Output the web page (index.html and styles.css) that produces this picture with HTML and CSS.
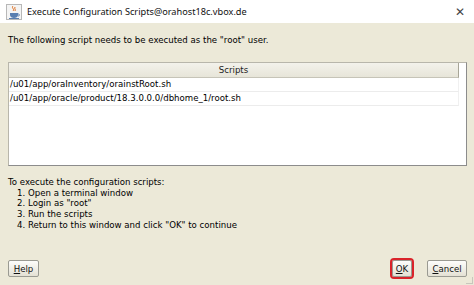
FILE: index.html
```html
<!DOCTYPE html>
<html>
<head>
    <title>Execute Configuration Scripts</title>
    <link rel="stylesheet" href="styles.css">
</head>
<body>
    <div class="window">
        <div class="titlebar">
            <svg class="app-icon" width="16" height="16" viewBox="0 0 16 16">
                <rect x="0.5" y="0.5" width="15" height="15" fill="#f4f4f4" stroke="#b8b8b8"/>
                <path d="M7 2 C5 4 9 5 7 7" fill="none" stroke="#e07020" stroke-width="1"/>
                <path d="M9 3 C8 5 10 5 9 7" fill="none" stroke="#e07020" stroke-width="1"/>
                <path d="M4 9 H12 V11 C12 13 10 14 8 14 C6 14 4 13 4 11 Z" fill="#5a7fb0"/>
                <path d="M12 10 C14 10 14 12 12 12" fill="none" stroke="#5a7fb0"/>
                <rect x="3" y="14" width="10" height="1" fill="#5a7fb0"/>
            </svg>
            <span class="title">Execute Configuration Scripts@orahost18c.vbox.de</span>
            <span class="close">&#x2715;</span>
        </div>

        <div class="content">
            <p class="intro">The following script needs to be executed as the "root" user.</p>

            <div class="table-box">
                <div class="table-head">Scripts</div>
                <div class="row">/u01/app/oraInventory/orainstRoot.sh</div>
                <div class="row">/u01/app/oracle/product/18.3.0.0.0/dbhome_1/root.sh</div>
            </div>

            <div class="steps">
                <div>To execute the configuration scripts:</div>
                <ol>
                    <li>Open a terminal window</li>
                    <li>Login as "root"</li>
                    <li>Run the scripts</li>
                    <li>Return to this window and click "OK" to continue</li>
                </ol>
            </div>
        </div>

        <div class="footer">
            <button class="btn btn-help"><u>H</u>elp</button>
            <div class="right-buttons">
                <button class="btn btn-ok"><u>O</u>K</button>
                <button class="btn btn-cancel"><u>C</u>ancel</button>
            </div>
        </div>
        <span class="grip"></span>
    </div>
</body>
</html>
```

FILE: styles.css
```css
html, body {
    margin: 0;
    padding: 0;
}
body {
    width: 474px;
    height: 285px;
    overflow: hidden;
    font-family: "DejaVu Sans", Tahoma, sans-serif;
    font-size: 8.6px;
    color: #000;
    background-color: #ece9d8;
}
.window {
    position: relative;
    height: 285px;
    display: flex;
    flex-direction: column;
}
.titlebar {
    height: 23px;
    background-color: #ffffff;
    display: flex;
    align-items: center;
    padding: 0 9px 0 6px;
    font-family: "Noto Sans", sans-serif;
    font-size: 9.2px;
    color: #111;
}
.app-icon {
    margin-right: 5px;
}
.title {
    flex: 1;
}
.close {
    font-size: 12px;
    color: #444;
}
.content {
    padding: 0 7px 0 8px;
    flex: 1;
}
.intro {
    margin: 11px 0 0 0;
    line-height: 12px;
}
.table-box {
    margin-top: 16px;
    height: 104px;
    border: 1px solid #8c8c8c;
    border-top-color: #b8b6ab;
    border-left-color: #b8b6ab;
    background-color: #ffffff;
    padding-right: 7px;
    box-sizing: border-box;
}
.table-head {
    height: 14px;
    line-height: 14px;
    text-align: center;
    background: linear-gradient(#f3f2eb, #e7e5d9);
    border-right: 1px solid #a7a597;
    border-bottom: 1px solid #c6c4b8;
    color: #222;
}
.row {
    height: 13px;
    line-height: 13px;
    padding-left: 1px;
    border-bottom: 1px solid #ececec;
    border-right: 1px solid #f0f0f0;
}
.steps {
    margin-top: 11px;
    line-height: 10.7px;
}
.steps ol {
    margin: 0;
    padding-left: 20px;
}
.footer {
    display: flex;
    justify-content: space-between;
    align-items: center;
    padding: 0 7px 8px 8px;
}
.right-buttons {
    display: flex;
    gap: 15px;
}
.btn {
    font-family: "DejaVu Sans", Tahoma, sans-serif;
    font-size: 8.6px;
    color: #111;
    height: 17px;
    padding: 0;
    background: linear-gradient(#fdfdfb, #e4e1d4);
    border: 1px solid #9a9a92;
    border-radius: 2px;
}
.btn-help {
    width: 31px;
}
.btn-ok {
    width: 20px;
    margin-left: 1px;
    outline: 2px solid #d9232a;
    outline-offset: 0;
}
.btn-cancel {
    width: 40px;
}
.grip {
    position: absolute;
    right: 1px;
    bottom: 1px;
    width: 6px;
    height: 6px;
    border-right: 1px solid #c8c6bc;
    border-bottom: 1px solid #c8c6bc;
}
```
